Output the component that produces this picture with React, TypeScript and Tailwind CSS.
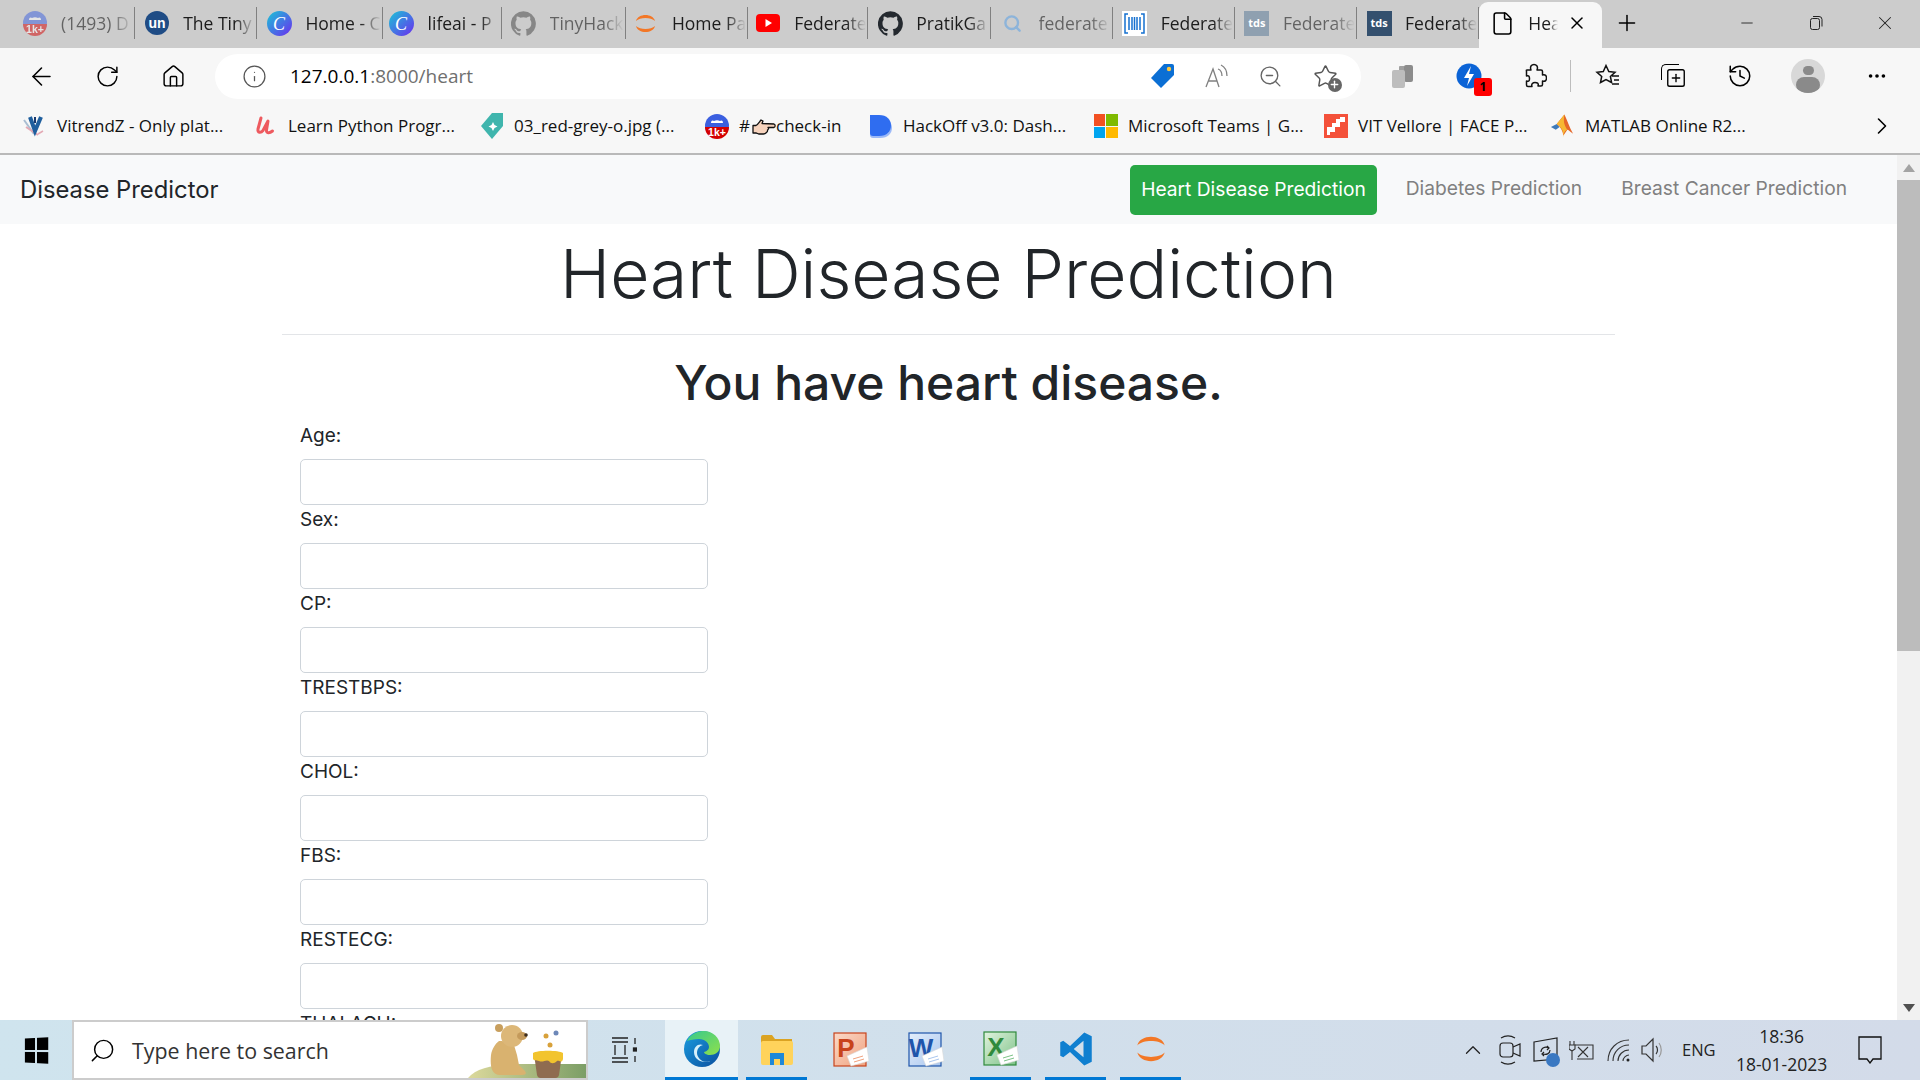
import React from "react";
import {
  ArrowLeft,
  ChevronRight,
  File,
  History,
  Home,
  Info,
  Minus,
  Plus,
  RotateCw,
  Search,
  SquarePlus,
  Star,
  X,
  ZoomOut,
  Ellipsis,
  ChevronUp,
} from "lucide-react";

const OneK = ({ dim = false }: { dim?: boolean }) => (
  <svg width="24" height="25" viewBox="0 0 24 25" className={dim ? "opacity-50" : ""}>
    <circle cx="12" cy="12" r="12" fill="#3b5fe0" />
    <path d="M0 13h24a12 12 0 0 1-24 0z" fill="#d40000" />
    <path d="M6 9c0-3 2-3 3-2 2-1 4-1 6 0 1-1 3-1 3 2z" fill="#fff" />
    <text x="12" y="22" textAnchor="middle" fontSize="10.500" fontWeight="700" fill="#fff" fontFamily="Liberation Sans">1k+</text>
  </svg>
);

const Un = () => (
  <svg width="24" height="24" viewBox="0 0 24 24">
    <circle cx="12" cy="12" r="12" fill="#1f4c85" />
    <text x="12" y="17" textAnchor="middle" fontSize="14" fontWeight="700" fill="#fff" fontFamily="Liberation Sans">un</text>
  </svg>
);

const Canva = () => (
  <svg width="25" height="25" viewBox="0 0 25 25">
    <defs>
      <linearGradient id="cv" x1="0" y1="0" x2="1" y2="1">
        <stop offset="0" stopColor="#19c6d6" />
        <stop offset="1" stopColor="#6c2bf0" />
      </linearGradient>
    </defs>
    <circle cx="12.500" cy="12.500" r="12.500" fill="url(#cv)" />
    <text x="12" y="19" textAnchor="middle" fontSize="18" fontStyle="italic" fill="#fff" fontFamily="Liberation Serif">C</text>
  </svg>
);

const Github = ({ color }: { color: string }) => (
  <svg width="25" height="25" viewBox="0 0 24 24" fill={color}>
    <path d="M12 .3a12 12 0 0 0-3.800 23.400c.6.100.8-.3.800-.6v-2c-3.300.7-4-1.600-4-1.600-.6-1.400-1.400-1.800-1.400-1.800-1-.7.100-.7.100-.7 1.200.1 1.800 1.200 1.800 1.200 1 1.800 2.800 1.300 3.500 1 .1-.8.400-1.300.8-1.600-2.700-.3-5.500-1.300-5.500-6 0-1.200.5-2.300 1.200-3.100-.1-.4-.5-1.600.1-3.200 0 0 1-.3 3.300 1.200a11.500 11.500 0 0 1 6 0c2.300-1.500 3.300-1.200 3.300-1.200.6 1.600.2 2.800.1 3.200.8.800 1.200 1.900 1.200 3.100 0 4.700-2.800 5.700-5.500 6 .4.400.8 1.100.8 2.200v3.300c0 .3.200.7.8.6A12 12 0 0 0 12 .3" />
  </svg>
);

const Jupyter = ({ size = 25 }: { size?: number }) => (
  <svg width={size} height={size} viewBox="0 0 25 25" fill="none">
    <path d="M3 10c2-8 17-8 19 0-4-4-15-4-19 0z" fill="#f37726" />
    <path d="M3 15c2 8 17 8 19 0-4 4-15 4-19 0z" fill="#f37726" />
  </svg>
);

const Youtube = () => (
  <svg width="24" height="18" viewBox="0 0 24 18">
    <rect width="24" height="18" rx="4" fill="#f00" />
    <path d="M9.500 5l6.500 4-6.500 4z" fill="#fff" />
  </svg>
);

const Barcode = () => (
  <div className="flex h-[25px] w-[25px] items-center justify-center bg-white">
    <svg width="21" height="21" viewBox="0 0 21 21" fill="none" stroke="#1570d0">
      <path d="M4 1H1v19h3M17 1h3v19h-3" strokeWidth="1.500" />
      <path d="M5 4v13M8 4v13M10.500 4v13M13 4v13M16 4v13" strokeWidth="1.500" />
    </svg>
  </div>
);

const Tds = ({ dim = false }: { dim?: boolean }) => (
  <div className={`flex h-[25px] w-[25px] items-center justify-center text-[11px] font-bold text-white ${dim ? "bg-[#8fa0b0]" : "bg-[#34506e]"}`}>
    tds
  </div>
);

const tabs: { id: number; icon: React.ReactNode; title: string; dim?: boolean }[] = [
  { id: 1, icon: <OneK dim />, title: "(1493) D", dim: true },
  { id: 2, icon: <Un />, title: "The Tiny" },
  { id: 3, icon: <Canva />, title: "Home - C" },
  { id: 4, icon: <Canva />, title: "lifeai - P" },
  { id: 5, icon: <div className="opacity-70"><Github color="#6b6b6b" /></div>, title: "TinyHack", dim: true },
  { id: 6, icon: <Jupyter />, title: "Home Pa" },
  { id: 7, icon: <Youtube />, title: "Federate" },
  { id: 8, icon: <Github color="#24292f" />, title: "PratikGa" },
  { id: 9, icon: <Search size={19} strokeWidth={3} className="text-[#8db4da]" />, title: "federate", dim: true },
  { id: 10, icon: <Barcode />, title: "Federate" },
  { id: 11, icon: <Tds dim />, title: "Federate", dim: true },
  { id: 12, icon: <Tds />, title: "Federate" },
];

const TabStrip = () => (
  <div className="flex h-[48px] shrink-0 items-end bg-[#cccccc] pl-[13px] text-[17.500px] text-[#1c1c1c]">
    {tabs.map((t) => (
      <div key={t.id} className="flex h-[46px] w-[122.2px] shrink-0 items-center justify-between pb-[6px] pt-[2px]">
        <div className="ml-[8px] flex w-[28px] shrink-0 items-center justify-center">{t.icon}</div>
        <div className={`ml-[12px] flex-1 whitespace-nowrap [mask-image:linear-gradient(to_right,black_72%,transparent)] ${t.dim ? "opacity-60" : ""}`}>
          {t.title}
        </div>
        <div className="ml-[1px] h-[32px] w-[1px] shrink-0 bg-[#808080]" />
      </div>
    ))}
    <div className="flex h-[46px] w-[123px] shrink-0 items-center rounded-t-[9px] bg-[#f7f7f7] pb-[4px]">
      <File size={25} strokeWidth={1.5} className="ml-[11px] shrink-0 text-black" />
      <div className="ml-[13px] w-[30px] whitespace-nowrap [mask-image:linear-gradient(to_right,black_70%,transparent)]">Hea</div>
      <X size={20} strokeWidth={1.8} className="ml-[9px] shrink-0 text-black" />
    </div>
    <div className="flex h-[46px] items-center pb-[4px] pl-[12px]">
      <Plus size={26} strokeWidth={1.4} className="text-black" />
    </div>
    <div className="flex h-[46px] flex-1 items-center justify-end pb-[4px] pr-[24px] text-[#222]">
      <Minus size={18} strokeWidth={1.2} />
      <svg width="18" height="18" viewBox="0 0 18 18" fill="none" stroke="#222" className="ml-[51px]">
        <rect x="3.500" y="4.500" width="9" height="11" rx="2" />
        <path d="M6 2.500h6a3 3 0 0 1 3 3v7" />
      </svg>
      <X size={22} strokeWidth={1.1} className="ml-[49px]" />
    </div>
  </div>
);

const Slot = ({ children, className = "w-[66px]" }: { children: React.ReactNode; className?: string }) => (
  <div className={`flex shrink-0 items-center justify-center ${className}`}>{children}</div>
);

const TagIcon = () => (
  <svg width="26" height="26" viewBox="0 0 26 26">
    <path d="M15 1h8a2 2 0 0 1 2 2v9L12 25 2 15z" fill="#0b6fd4" />
    <circle cx="20" cy="6" r="2.200" fill="#ffc83d" />
  </svg>
);

const ReadAloud = () => (
  <svg width="26" height="26" viewBox="0 0 26 26" fill="none" stroke="#808080" strokeWidth="1.300">
    <path d="M3 24L10 6l6 18M5.500 18h9" />
    <path d="M15 6c3 1 4 4 4 7M18 2c4 2 6 6 6 11" />
  </svg>
);

const StarPlus = () => (
  <div className="relative">
    <Star size={25} strokeWidth={1.4} className="text-[#555]" />
    <div className="absolute -bottom-[3px] -right-[4px] flex h-[14px] w-[14px] items-center justify-center rounded-full bg-[#666] text-white">
      <Plus size={11} strokeWidth={3} />
    </div>
  </div>
);

const Bolt = () => (
  <div className="relative">
    <svg width="26" height="26" viewBox="0 0 26 26">
      <circle cx="13" cy="13" r="12.500" fill="#0b63d6" />
      <path d="M15 3l-7 12h5l-2 8 7-12h-5z" fill="#fff" />
    </svg>
    <div className="absolute -bottom-[7px] -right-[10px] flex h-[18px] w-[18px] items-center justify-center rounded-[3px] bg-[#f00] text-[12px] font-bold text-black">1</div>
  </div>
);

const PuzzleIcon = () => (
  <svg width="24" height="26" viewBox="0 0 24 26" fill="none" stroke="#111" strokeWidth="1.500" strokeLinejoin="round">
    <path d="M4 7h4c-1.500-4 1-5.500 3-5.500S15.500 3 14 7h4c1 0 1.500.5 1.500 1.500V12c3-1 4 1 4 3s-1 4-4 3v3.500c0 1-.5 1.500-1.500 1.500h-3c1-3-1-3.500-3-3.500S8 21 9 23.500H5c-1 0-1.500-.5-1.500-1.500v-4c3 1 3-1 3-2.500S6 12 3.500 13V8.500C3.500 7.500 3 7 4 7z" />
  </svg>
);

const FavList = () => (
  <svg width="26" height="26" viewBox="0 0 26 26" fill="none" stroke="#111" strokeWidth="1.500">
    <path d="M11 2.500l2.800 6 6.200.7-4.600 4.200 1.200 6.100L11 16.500l-5.500 3 1.200-6.100L2 9.200l6.300-.7zM17 13h7M19 17h5M17 21h7" />
  </svg>
);

const Collections = () => (
  <div className="relative">
    <SquarePlus size={22} strokeWidth={1.5} className="ml-[4px] mt-[3px] text-black" />
    <div className="absolute left-0 top-0 h-[16px] w-[18px] rounded-tl-[5px] border-l-[1.5px] border-t-[1.5px] border-black" />
  </div>
);

const Toolbar = () => (
  <div className="flex h-[56px] shrink-0 items-center bg-[#f7f7f7] pl-[8px]">
    <Slot><ArrowLeft size={29} strokeWidth={1.3} className="text-black" /></Slot>
    <Slot><RotateCw size={25} strokeWidth={1.4} className="text-black" /></Slot>
    <Slot><Home size={25} strokeWidth={1.4} className="text-black" /></Slot>
    <div className="ml-[9px] flex h-[45px] w-[1146px] shrink-0 items-center rounded-full bg-white pr-[8px]">
      <Info size={25} strokeWidth={1.2} className="ml-[27px] text-[#555]" />
      <div className="ml-[23px] flex-1 text-[19px] text-black">
        127.0.0.1<span className="text-[#6f6f6f]">:8000/heart</span>
      </div>
      <Slot className="w-[46px]"><TagIcon /></Slot>
      <Slot className="ml-[4px] w-[54px]"><ReadAloud /></Slot>
      <Slot className="w-[54px]"><ZoomOut size={25} strokeWidth={1.3} className="text-[#666]" /></Slot>
      <Slot className="w-[56px]"><StarPlus /></Slot>
    </div>
    <Slot className="ml-[9px] w-[66px]">
      <svg width="24" height="26" viewBox="0 0 24 26">
        <rect x="8" y="3" width="6" height="18" rx="1" fill="#a0a0a0" />
        <rect x="13" y="2" width="9" height="17" rx="2" fill="#8c8c8c" />
        <rect x="1" y="7" width="13" height="18" rx="2" fill="#bdbdbd" />
      </svg>
    </Slot>
    <Slot><Bolt /></Slot>
    <Slot><PuzzleIcon /></Slot>
    <div className="ml-[2px] mr-[4px] h-[32px] w-[1px] shrink-0 bg-[#bdbdbd]" />
    <Slot><FavList /></Slot>
    <Slot><Collections /></Slot>
    <Slot><History size={26} strokeWidth={1.4} className="text-black" /></Slot>
    <Slot className="ml-[2px] w-[66px]">
      <div className="flex h-[34px] w-[34px] flex-col items-center overflow-hidden rounded-full bg-[#d8d8d8]">
        <div className="mt-[7px] h-[11px] w-[11px] rounded-full bg-[#8a8a8a]" />
        <div className="mt-[2px] h-[20px] w-[24px] rounded-full bg-[#8a8a8a]" />
      </div>
    </Slot>
    <Slot className="ml-[3px] w-[66px]"><Ellipsis size={22} className="text-black" /></Slot>
  </div>
);

const Vitrendz = () => (
  <svg width="24" height="24" viewBox="0 0 24 24" fill="none">
    <path d="M1 6l10 14" stroke="#a9bdd2" strokeWidth="2" />
    <path d="M3 13l12 8" stroke="#e3a9b4" strokeWidth="2" />
    <path d="M7 3l5 14L18 3" stroke="#1f5f9e" strokeWidth="4" />
    <path d="M12 3v6" stroke="#17386e" strokeWidth="2" />
    <path d="M15 20l5-3" stroke="#e3a9b4" strokeWidth="1.500" />
  </svg>
);

const Udemy = () => (
  <svg width="22" height="20" viewBox="0 0 22 20" fill="none" stroke="#ee5a5f" strokeWidth="3" strokeLinecap="round" strokeLinejoin="round">
    <path d="M6 2L3 13c-.8 4 3 4 5 1.500L13 5l-1.500 9c-.4 3.500 3 3.500 6 1" />
  </svg>
);

const Compass = () => (
  <svg width="24" height="28" viewBox="0 0 24 28">
    <path d="M12 1h11v13L12 27 1 14z" fill="#3fb5ad" />
    <path d="M13 10l1.500 3 3 1.500-3 1.500-1.500 3-1.500-3-3-1.500 3-1.500z" fill="#fff" />
  </svg>
);

const HackOff = () => (
  <svg width="24" height="26" viewBox="0 0 24 26">
    <path d="M1 4h10c8 0 12 6 12 11s-4 10-12 10H4a3 3 0 0 1-3-3z" fill="#9bb9f8" />
    <path d="M1 2h9c8 0 12 5 12 10.500S18 23 10 23H4a3 3 0 0 1-3-3z" fill="#2f6df0" />
  </svg>
);

const Teams = () => (
  <div className="grid h-[24px] w-[24px] grid-cols-2 gap-[1px]">
    <div className="bg-[#f25022]" />
    <div className="bg-[#7fba00]" />
    <div className="bg-[#00a4ef]" />
    <div className="bg-[#ffb900]" />
  </div>
);

const Vit = () => (
  <svg width="24" height="24" viewBox="0 0 24 24">
    <rect width="24" height="24" fill="#f4513a" />
    <path d="M16 3h5v5h-5v5h-5v5H6v3H3v-8h5V9h4V5h4z" fill="#fff" />
  </svg>
);

const Matlab = () => (
  <svg width="26" height="26" viewBox="0 0 26 26">
    <path d="M1 14l6-3 3 3-4 3z" fill="#3f7ab8" />
    <path d="M7 11l8-10c3 6 5 13 9 20-3-2-5-4-6-4l-4 6c-1-5-3-9-7-12z" fill="#e5672a" />
    <path d="M15 1c-1 6-1 10 3 16-3 1-4 4-4 8 0-6-1-10-7-14z" fill="#f7b733" />
  </svg>
);

// the pointing hand in the bookmark title
const Hand = () => (
  <svg width="24" height="17" viewBox="0 0 24 17" className="ml-[2px] inline-block align-[-3px]" fill="#f6d3bd" stroke="#111" strokeWidth="1.300" strokeLinejoin="round">
    <path d="M1 7.500h3c2-1 3-3 5-5.500l2 1-1 2.500 12 .5c1.500.5 1.500 3 0 3.500h-6c1 1 .5 2-.5 2.500.5 1-.5 2-1 2.500-1 1-2 1.500-3 1.500H7c-1 0-2-1-3-1H1z" />
  </svg>
);

const bookmarks: { icon: React.ReactNode; text: React.ReactNode; w: string }[] = [
  { icon: <Vitrendz />, text: "VitrendZ - Only plat...", w: "w-[231px]" },
  { icon: <Udemy />, text: "Learn Python Progr...", w: "w-[226px]" },
  { icon: <Compass />, text: "03_red-grey-o.jpg (...", w: "w-[225px]" },
  { icon: <OneK />, text: <>#<Hand />check-in</>, w: "w-[164px]" },
  { icon: <HackOff />, text: "HackOff v3.0: Dash...", w: "w-[225px]" },
  { icon: <Teams />, text: "Microsoft Teams | G...", w: "w-[230px]" },
  { icon: <Vit />, text: "VIT Vellore | FACE P...", w: "w-[227px]" },
  { icon: <Matlab />, text: "MATLAB Online R2...", w: "w-[300px]" },
];

const Bookmarks = () => (
  <div className="flex h-[49px] shrink-0 items-center bg-[#f7f7f7] pb-[5px] pl-[22px] text-[17px] text-[#111]">
    {bookmarks.map((b, i) => (
      <div key={i} className={`flex shrink-0 items-center gap-[10px] whitespace-nowrap ${b.w}`}>
        <div className="flex w-[25px] justify-center">{b.icon}</div>
        <span>{b.text}</span>
      </div>
    ))}
    <div className="flex flex-1 justify-end pr-[24px]">
      <ChevronRight size={28} strokeWidth={1.4} className="text-black" />
    </div>
  </div>
);

const Field = ({ label }: { label: string }) => (
  <div>
    <label className="mb-[8px] block text-[19px] leading-[30px]">{label}</label>
    <div className="h-[46px] w-[408px] rounded-[5px] border-[1.5px] border-[#ced4da] bg-white" />
  </div>
);

const Page = () => (
  <div className="flex min-h-0 flex-1 overflow-hidden border-t-[2px] border-[#b9b9b9] font-['Inter',sans-serif] text-[#212529]">
    <div className="min-w-0 flex-1">
      <nav className="flex h-[69px] items-center bg-[#f8f9fa] pl-[20px] pr-[40px]">
        <div className="flex-1 text-[23.800px]">Disease Predictor</div>
        <div className="flex items-center gap-[19px] text-[19.200px]">
          <div className="flex h-[50px] items-center rounded-[5px] bg-[#28a745] px-[11px] text-white">Heart Disease Prediction</div>
          <div className="px-[10px] pb-[2px] text-[#808080]">Diabetes Prediction</div>
          <div className="px-[10px] pb-[2px] text-[#808080]">Breast Cancer Prediction</div>
        </div>
      </nav>
      <div className="mx-auto w-[1333px]">
        <div className="flex h-[111px] items-center justify-center border-b-[1.5px] border-[#e3e5e8] pb-[10px] text-[67.700px] font-light">Heart Disease Prediction</div>
        <h2 className="h-[86px] pt-[15px] text-center text-[48px] font-medium leading-[66px]">You have heart disease.</h2>
        <div className="pl-[18px]">
          {["Age:", "Sex:", "CP:", "TRESTBPS:", "CHOL:", "FBS:", "RESTECG:", "THALACH:"].map((l) => (
            <Field key={l} label={l} />
          ))}
        </div>
      </div>
    </div>
    <div className="flex w-[23px] shrink-0 flex-col items-center bg-[#f1f1f1]">
      <div className="flex h-[25px] w-full items-center justify-center">
        <div className="h-0 w-0 border-x-[6px] border-b-[8px] border-x-transparent border-b-[#a3a3a3]" />
      </div>
      <div className="h-[471px] w-full bg-[#bcbcbc]" />
      <div className="flex-1" />
      <div className="flex h-[25px] w-full items-center justify-center">
        <div className="h-0 w-0 border-x-[6px] border-t-[8px] border-x-transparent border-t-[#505050]" />
      </div>
    </div>
  </div>
);

const Bear = () => (
  <svg width="118" height="56" viewBox="0 0 118 56" className="absolute bottom-0 right-0">
    <defs>
      <linearGradient id="hill" x1="0" y1="0" x2="1" y2="0">
        <stop offset="0" stopColor="#dcd99c" />
        <stop offset="1" stopColor="#7c9e66" />
      </linearGradient>
    </defs>
    <path d="M0 56c8-10 26-14 50-14h68v14z" fill="url(#hill)" />
    <path d="M32 53c-9 0-10-10-9-20 1-6 4-11 8-14l3 0 12 4 3 10 2 10 6 6c2 3 0 4-3 4z" fill="#d9b26f" />
    <circle cx="44" cy="14" r="11" fill="#dcb778" />
    <circle cx="31" cy="6" r="4" fill="#c89f5e" />
    <ellipse cx="54" cy="14" rx="5" ry="4" fill="#c49a5b" />
    <circle cx="58" cy="13" r="1.800" fill="#3b2b1c" />
    <path d="M66 32h28l-3 21a4 4 0 0 1-4 3H73a4 4 0 0 1-4-3z" fill="#8f6c50" />
    <path d="M65 31c4-3 26-3 30 0v6c-1 5-4 1-6 2-3 3-6 3-8 0-3-2-6 2-10 0-3-1-5 0-6-2z" fill="#f2c42e" />
    <circle cx="78" cy="14" r="2.500" fill="#d8a13a" />
    <circle cx="88" cy="11" r="2.500" fill="#6d88b8" />
    <circle cx="82" cy="23" r="2.500" fill="#d8a13a" />
  </svg>
);

const WinLogo = () => (
  <div className="grid h-[25px] w-[24px] grid-cols-2 gap-[2px] [transform:perspective(60px)_rotateY(-14deg)]">
    <div className="bg-black" />
    <div className="bg-black" />
    <div className="bg-black" />
    <div className="bg-black" />
  </div>
);

const TaskView = () => (
  <svg width="26" height="26" viewBox="0 0 26 26" fill="none" stroke="#222" strokeWidth="1.300">
    <path d="M1 1h16M1 5h16M4 8v10M14 8v10M1 21h16M1 25h16" />
    <path d="M24 1v6M24 19v6" />
    <rect x="22.500" y="11" width="3" height="3" fill="#222" />
  </svg>
);

const Edge = () => (
  <svg width="38" height="38" viewBox="0 0 38 38">
    <defs>
      <linearGradient id="eg" x1="0" y1="0" x2="1" y2="1">
        <stop offset="0" stopColor="#36c98e" />
        <stop offset="1" stopColor="#8fe04b" />
      </linearGradient>
      <linearGradient id="eb" x1="0" y1="0" x2="1" y2="1">
        <stop offset="0" stopColor="#1a9de0" />
        <stop offset="1" stopColor="#0b4f9e" />
      </linearGradient>
    </defs>
    <circle cx="19" cy="19" r="18" fill="url(#eb)" />
    <path d="M4 11C8 3 16 1 21 1c9 0 16 7 16 15 0 6-5 9-10 9-4 0-6-2-6-3 0 0 5-1 5-5 0-4-4-8-10-8-5 0-9 1-12 2z" fill="url(#eg)" />
    <path d="M20 15c-4 1-6 4-6 8s4 9 10 9c2 0 3-1 3-1-7 3-16-1-16-9 0-5 4-9 9-7z" fill="#d6f0fa" />
  </svg>
);

const Explorer = () => (
  <svg width="34" height="32" viewBox="0 0 34 32">
    <path d="M1 4a2 2 0 0 1 2-2h9l3 4h17v6H1z" fill="#dba322" />
    <rect x="1" y="8" width="32" height="24" rx="2" fill="#ffd35b" />
    <path d="M10 32V20h14v12h-4v-6h-6v6z" fill="#1e88d8" />
  </svg>
);

const OfficeDoc = ({ id, letter, dark, mid, light }: { id: string; letter: string; dark: string; mid: string; light: string }) => (
  <svg width="36" height="36" viewBox="0 0 36 36">
    <defs>
      <linearGradient id={id} x1="0" y1="0" x2="1" y2="1">
        <stop offset="0" stopColor={light} />
        <stop offset="1" stopColor={mid} />
      </linearGradient>
    </defs>
    <rect x="1" y="1" width="32" height="33" fill={`url(#${id})`} stroke={dark} strokeWidth="1.200" />
    <text x="13" y="25" textAnchor="middle" fontSize="26" fontWeight="700" fill={dark} fontFamily="Liberation Sans">{letter}</text>
    <path d="M14 24l20-9 2 14-18 5z" fill="#fff" stroke="#d8d8d8" strokeWidth=".6" />
    <path d="M20 27l10-3M21 30l10-3" stroke={mid} strokeWidth="1" />
  </svg>
);

const VsCode = () => (
  <svg width="36" height="36" viewBox="0 0 24 24">
    <path d="M17.500 1L8 10 3.500 6.500 1.500 7.500v9l2 1L8 14l9.500 9 5-2.500v-17zM17 6.500v11L10.500 12z" fill="#0f7fd0" />
  </svg>
);

const MeetIcon = () => (
  <svg width="24" height="32" viewBox="0 0 24 32" fill="none" stroke="#222" strokeWidth="1.200">
    <path d="M3 4c5-3 9-3 14 0M3 28c5 3 9 3 14 0" />
    <rect x="2" y="9" width="13" height="14" rx="3" />
    <path d="M15 13l7-3v12l-7-3" />
  </svg>
);

const DisplaySync = () => (
  <div className="relative">
    <svg width="26" height="26" viewBox="0 0 26 26" fill="none" stroke="#222" strokeWidth="1.200">
      <path d="M1 5L24 1v21l-23 2z" />
      <path d="M8 15c0-4 4-6 8-4M17 13c0 4-4 5-7 4M14 9l2 2-2 2M11 15l-2 2 2 2" />
    </svg>
    <div className="absolute -bottom-[4px] -right-[1px] h-[14px] w-[14px] rounded-full bg-[#3a78c2]" />
  </div>
);

const PowerIcon = () => (
  <svg width="26" height="22" viewBox="0 0 26 22" fill="none" stroke="#333" strokeWidth="1.100">
    <path d="M1 2v4M5 2v4M0 6h6v4l-3 2-3-2zM3 12v9" />
    <path d="M6 6h18v14H8" />
    <path d="M9 8l10 10M19 8L9 18" />
  </svg>
);

const WifiIcon = () => (
  <svg width="24" height="24" viewBox="0 0 24 24" fill="none" stroke="#333" strokeWidth="1.100">
    <path d="M2 23C2 11 11 2 23 2M7 23c0-9 7-16 16-16M12 23c0-6 5-11 11-11M17 23c0-3 3-6 6-6" />
    <circle cx="22" cy="22" r="1.500" fill="#222" stroke="none" />
  </svg>
);

const SpeakerIcon = () => (
  <svg width="24" height="26" viewBox="0 0 24 26" fill="none" stroke="#333" strokeWidth="1.200">
    <path d="M1 9h4l7-7v22l-7-7H1z" />
    <path d="M15 9c2 2 2 6 0 8" />
    <path d="M18 6c3 4 3 10 0 14" stroke="#999" />
  </svg>
);

const Notify = () => (
  <svg width="26" height="28" viewBox="0 0 26 28" fill="none" stroke="#111" strokeWidth="1.300">
    <path d="M2 1h22v22h-8l-3 4-3-4H2z" />
  </svg>
);

const Taskbar = () => (
  <div className="flex h-[60px] shrink-0 items-center bg-linear-to-r from-[#cfe4ee] to-[#d3dbe9] text-[#222]">
    <div className="flex w-[71px] shrink-0 justify-center"><WinLogo /></div>
    <div className="relative ml-[1px] flex h-[60px] w-[516px] shrink-0 items-center overflow-hidden border-[2px] border-[#cccccc] bg-white">
      <Search size={27} strokeWidth={1.3} className="ml-[15px] -scale-x-100 text-black" />
      <span className="ml-[16px] mt-[2px] text-[21.400px] text-[#333]">Type here to search</span>
      <Bear />
    </div>
    <Slot className="w-[71px]"><TaskView /></Slot>
    <div className="ml-[6px] flex h-[60px] w-[73px] shrink-0 items-center justify-center border-b-[3px] border-[#0078d4] bg-[#e8f2f7]"><Edge /></div>
    <div className="ml-[8px] flex h-[60px] w-[61px] shrink-0 items-center justify-center border-b-[3px] border-[#0078d4]"><Explorer /></div>
    <Slot className="ml-[13px] w-[62px]"><OfficeDoc id="pp" letter="P" dark="#c8431b" mid="#f0a27f" light="#fbd9c8" /></Slot>
    <Slot className="ml-[13px] w-[62px]"><OfficeDoc id="wd" letter="W" dark="#1f55ab" mid="#a9c6ee" light="#e4eefb" /></Slot>
    <div className="ml-[13px] flex h-[60px] w-[61px] shrink-0 items-center justify-center border-b-[3px] border-[#0078d4]"><OfficeDoc id="xl" letter="X" dark="#2f8a3c" mid="#7cc287" light="#e2f3df" /></div>
    <div className="ml-[14px] flex h-[60px] w-[61px] shrink-0 items-center justify-center border-b-[3px] border-[#0078d4]"><VsCode /></div>
    <div className="ml-[14px] flex h-[60px] w-[61px] shrink-0 items-center justify-center border-b-[3px] border-[#0078d4]"><Jupyter size={36} /></div>
    <div className="ml-[276px] flex shrink-0 items-center">
      <Slot className="ml-[1px] w-[30px]"><ChevronUp size={26} strokeWidth={1.2} /></Slot>
      <Slot className="ml-[7px] w-[30px]"><MeetIcon /></Slot>
      <Slot className="ml-[6px] w-[30px]"><DisplaySync /></Slot>
      <Slot className="ml-[6px] w-[30px]"><PowerIcon /></Slot>
      <Slot className="ml-[6px] w-[30px]"><WifiIcon /></Slot>
      <Slot className="ml-[5px] w-[30px]"><SpeakerIcon /></Slot>
      <span className="ml-[14px] text-[16.500px]">ENG</span>
    </div>
    <div className="ml-[9px] flex w-[114px] shrink-0 flex-col items-center text-[17.500px] leading-[28px]">
      <span>18:36</span>
      <span>18-01-2023</span>
    </div>
    <Slot className="ml-[11px] w-[40px]"><Notify /></Slot>
  </div>
);

export default function App() {
  return (
    <div className="flex h-[1080px] w-[1920px] flex-col overflow-hidden bg-white font-['Open_Sans',sans-serif]">
      <TabStrip />
      <Toolbar />
      <Bookmarks />
      <Page />
      <Taskbar />
    </div>
  );
}
